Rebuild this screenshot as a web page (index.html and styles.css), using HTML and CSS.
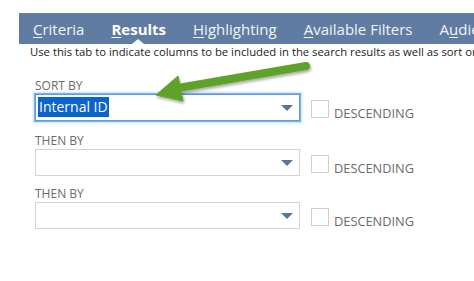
FILE: index.html
```html
<!DOCTYPE html>
<html>
<head>
<meta charset="utf-8">
<link rel="stylesheet" href="styles.css">
</head>
<body>
<div class="page">
  <div class="tabs">
    <div class="tab"><u>C</u>riteria</div>
    <div class="tab active"><u>R</u>esults</div>
    <div class="tab"><u>H</u>ighlighting</div>
    <div class="tab"><u>A</u>vailable Filters</div>
    <div class="tab">A<u>u</u>dience</div>
  </div>
  <div class="desc">Use this tab to indicate columns to be included in the search results as well as sort order.</div>
  <div class="sort">
    <div class="group first">
      <div class="label">SORT BY</div>
      <div class="row">
        <div class="select focused"><span class="sel">Internal ID</span><span class="caret"></span></div>
        <div class="check"><span class="box"></span><span class="ctext">DESCENDING</span></div>
      </div>
    </div>
    <div class="group">
      <div class="label">THEN BY</div>
      <div class="row">
        <div class="select"><span class="caret"></span></div>
        <div class="check"><span class="box"></span><span class="ctext">DESCENDING</span></div>
      </div>
    </div>
    <div class="group">
      <div class="label">THEN BY</div>
      <div class="row">
        <div class="select"><span class="caret"></span></div>
        <div class="check"><span class="box"></span><span class="ctext">DESCENDING</span></div>
      </div>
    </div>
  </div>
  <svg class="arrow" viewBox="0 0 474 281" width="474" height="281">
    <defs>
      <filter id="sh" x="-20%" y="-50%" width="140%" height="200%">
        <feDropShadow dx="1" dy="2" stdDeviation="1.5" flood-color="#000" flood-opacity="0.35"/>
      </filter>
    </defs>
    <g filter="url(#sh)" fill="#5ea22c" stroke="#5ea22c">
      <line x1="178" y1="88" x2="306" y2="66" stroke-width="8" stroke-linecap="round"/>
      <polygon points="156,95 178,76 183,101" stroke-width="1" stroke-linejoin="round"/>
    </g>
  </svg>
</div>
</body>
</html>
```
FILE: styles.css
```css
html, body {
  margin: 0;
  padding: 0;
  background: #fff;
}
.page {
  position: relative;
  width: 474px;
  height: 281px;
  overflow: hidden;
  font-family: "Open Sans", "DejaVu Sans", sans-serif;
  white-space: nowrap;
}
.tabs {
  margin: 13px 0 0 19px;
  height: 31px;
  background: #607ca2;
  display: flex;
  width: 600px;
}
.tab {
  position: relative;
  padding: 2px 13px 0 14px;
  line-height: 29px;
  font-size: 15px;
  color: #f2f4f8;
}
.tab u {
  text-decoration-thickness: 1px;
  text-underline-offset: 2px;
}
.tab.active {
  font-weight: 700;
  color: #fff;
}
.tab.active::after {
  content: "";
  position: absolute;
  left: 50%;
  bottom: 0;
  margin-left: -6px;
  border-left: 6px solid transparent;
  border-right: 6px solid transparent;
  border-bottom: 5px solid #fff;
}
.desc {
  padding-left: 30px;
  font-size: 11.3px;
  line-height: 15px;
  color: #222;
  height: 15px;
}
.sort {
  padding-left: 35px;
  margin-top: 18px;
}
.group {
  margin-bottom: 9px;
}
.group.first {
  margin-bottom: 11px;
}
.label {
  font-size: 12px;
  line-height: 17px;
  color: #6b6b6b;
}
.row {
  display: flex;
  align-items: center;
}
.select {
  position: relative;
  box-sizing: border-box;
  width: 265px;
  height: 27px;
  border: 1px solid #d4d4d4;
  background: #fff;
}
.select.focused {
  border: 1px solid #5b9be0;
  box-shadow: 0 0 0 1px #7eb1ea, 0 0 2px 2px rgba(120, 170, 230, 0.4);
}
.sel {
  position: absolute;
  left: 2px;
  top: 2px;
  height: 20px;
  line-height: 20px;
  font-size: 14px;
  color: #fff;
  background: #0b63cc;
  padding: 0 1px;
}
.caret {
  position: absolute;
  right: 6px;
  top: 10px;
  width: 0;
  height: 0;
  border-left: 6px solid transparent;
  border-right: 6px solid transparent;
  border-top: 6px solid #5a7496;
}
.check {
  display: flex;
  align-items: flex-end;
  margin-left: 11px;
  margin-top: 2px;
}
.box {
  box-sizing: border-box;
  width: 18px;
  height: 18px;
  border: 1px solid #cfcfcf;
  background: #fff;
}
.ctext {
  margin-left: 5px;
  font-size: 12.8px;
  line-height: 13px;
  color: #6b6b6b;
  position: relative;
  top: 2px;
}
.arrow {
  position: absolute;
  left: 0;
  top: 0;
  pointer-events: none;
}
```
